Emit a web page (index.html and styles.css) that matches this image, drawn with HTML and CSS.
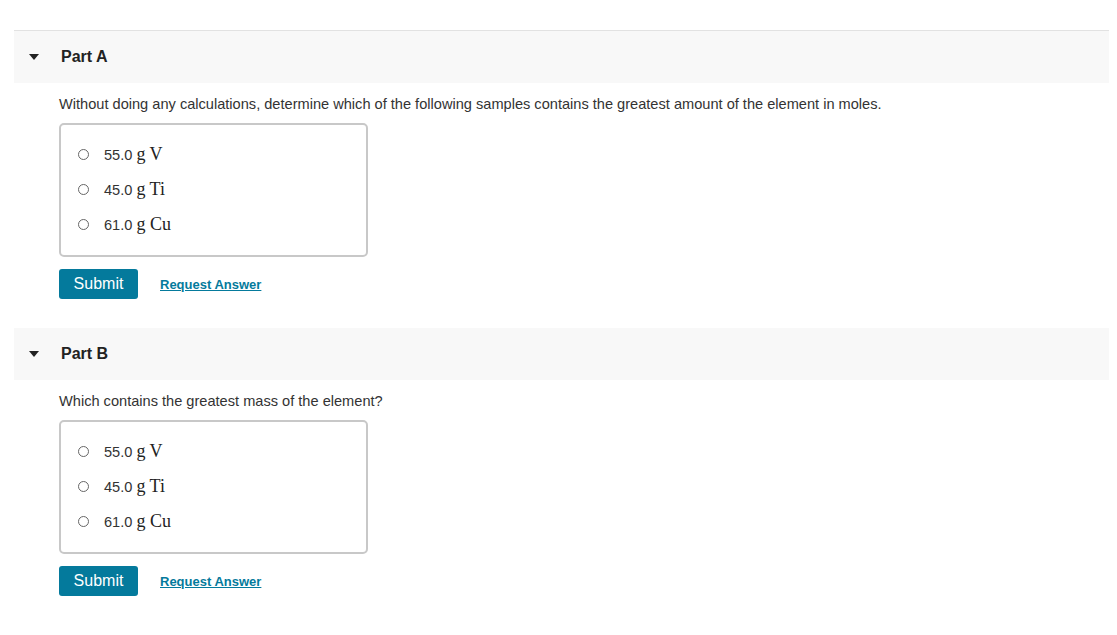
FILE: index.html
```html
<!DOCTYPE html>
<html lang="en">
<head>
    <meta charset="UTF-8">
    <title>Parts</title>
    <link rel="stylesheet" href="styles.css">
</head>
<body>

    <div class="parts">
        <div class="part first">
            <div class="part-header">
                <span class="caret"></span>
                <span class="part-title">Part A</span>
            </div>
            <div class="part-body">
                <p class="question">Without doing any calculations, determine which of the following samples contains the greatest amount of the element in moles.</p>
                <div class="choices">
                    <label class="choice"><span class="radio"></span><span class="num">55.0</span><span class="math">g V</span></label>
                    <label class="choice"><span class="radio"></span><span class="num">45.0</span><span class="math">g Ti</span></label>
                    <label class="choice"><span class="radio"></span><span class="num">61.0</span><span class="math">g Cu</span></label>
                </div>
                <div class="actions">
                    <button class="submit-btn">Submit</button>
                    <a class="request-link" href="#">Request Answer</a>
                </div>
            </div>
        </div>

        <div class="part">
            <div class="part-header">
                <span class="caret"></span>
                <span class="part-title">Part B</span>
            </div>
            <div class="part-body">
                <p class="question">Which contains the greatest mass of the element?</p>
                <div class="choices">
                    <label class="choice"><span class="radio"></span><span class="num">55.0</span><span class="math">g V</span></label>
                    <label class="choice"><span class="radio"></span><span class="num">45.0</span><span class="math">g Ti</span></label>
                    <label class="choice"><span class="radio"></span><span class="num">61.0</span><span class="math">g Cu</span></label>
                </div>
                <div class="actions">
                    <button class="submit-btn">Submit</button>
                    <a class="request-link" href="#">Request Answer</a>
                </div>
            </div>
        </div>
    </div>

</body>
</html>
```

FILE: styles.css
```css
body {
    margin: 0;
    font-family: "Liberation Sans", Arial, sans-serif;
    color: #333;
    background: #fff;
}
.parts {
    margin: 30px 0 0 14px;
    width: 1095px;
}
.part.first .part-header {
    border-top: 1px solid #e2e2e2;
}
.part-header {
    display: flex;
    align-items: center;
    height: 52px;
    background: #f8f8f8;
}
.caret {
    width: 0;
    height: 0;
    margin-left: 15px;
    border-left: 5px solid transparent;
    border-right: 5px solid transparent;
    border-top: 6px solid #222;
}
.part-title {
    margin-left: 22px;
    font-size: 16px;
    font-weight: bold;
    color: #222;
}
.part-body {
    padding-left: 45px;
}
.question {
    margin: 11px 0 9px;
    font-size: 14.6px;
    line-height: 20px;
    color: #333;
}
.choices {
    width: 305px;
    padding: 12px 0 13px;
    border: 2px solid #c8c8c8;
    border-radius: 5px;
}
.choice {
    display: flex;
    align-items: center;
    height: 35px;
    padding-left: 17px;
    font-size: 14.6px;
}
.radio {
    width: 9px;
    height: 9px;
    border: 1px solid #666;
    border-radius: 50%;
    margin-right: 15px;
}
.num {
    color: #333;
}
.math {
    margin-left: 4px;
    font-family: "Liberation Serif", "Times New Roman", serif;
    font-size: 18px;
    color: #222;
}
.actions {
    display: flex;
    align-items: center;
    gap: 22px;
    margin-top: 12px;
    margin-bottom: 29px;
}
.submit-btn {
    width: 79px;
    height: 30px;
    background: #047a9c;
    color: #fff;
    border: none;
    border-radius: 3px;
    font-family: "Liberation Sans", Arial, sans-serif;
    font-size: 16px;
    cursor: pointer;
}
.request-link {
    font-size: 13px;
    font-weight: bold;
    color: #047a9c;
    text-decoration: underline;
}
```
